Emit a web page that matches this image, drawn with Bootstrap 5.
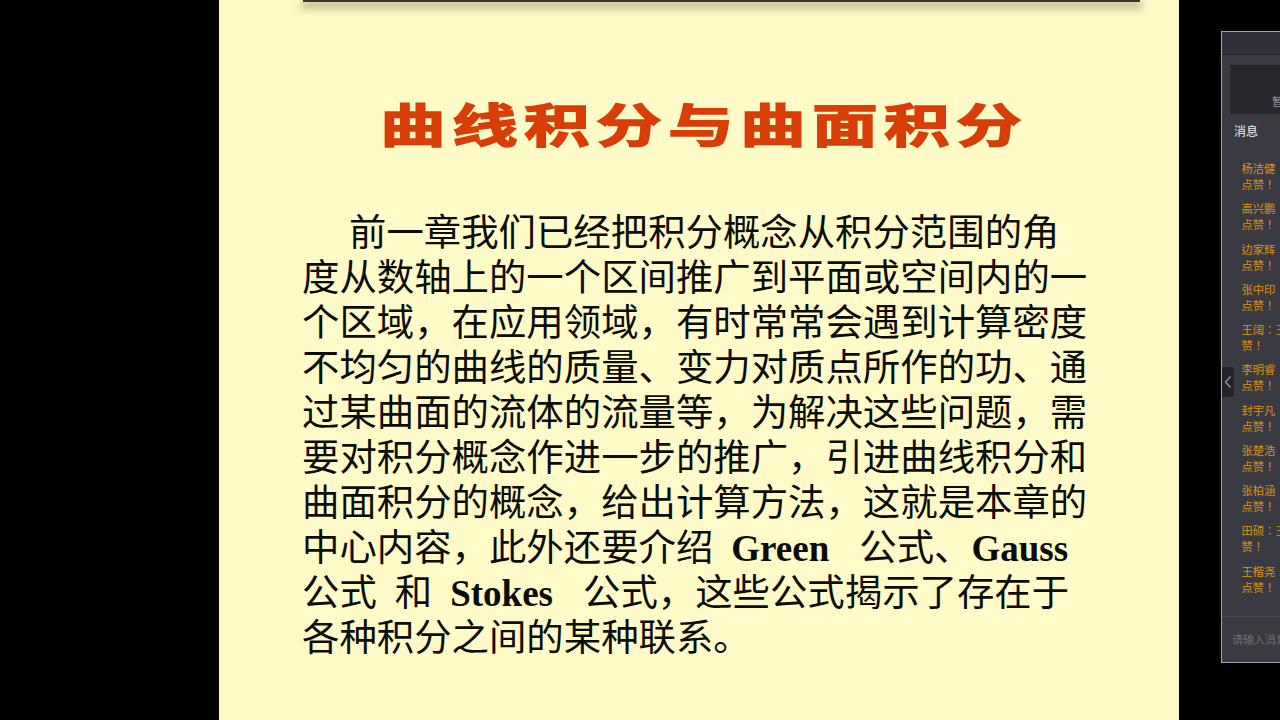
<!doctype html>
<html lang="zh-CN">
<head>
<meta charset="utf-8">
<title>曲线积分与曲面积分</title>
<link rel="stylesheet" href="https://cdn.jsdelivr.net/npm/bootstrap@5.3.0/dist/css/bootstrap.min.css">
<style>
html,body{height:720px;overflow:hidden;background:#000}
.stage{width:1280px;height:720px;background:#000;overflow:hidden}
.slide{width:960px;height:720px;margin-left:219px;background:#fffbc8;font-family:"Liberation Serif","Noto Sans CJK SC",serif;color:#0c0c08}
.topbar{height:2px;margin:0 39px 0 84px;background:#3d3230;box-shadow:0 4px 9px 2px rgba(120,110,60,.6)}
.heading{height:74px;margin-top:83px;margin-left:10px;margin-bottom:52px;text-align:center;line-height:74px;white-space:nowrap;color:#d93d08;font-family:"Noto Sans CJK SC",sans-serif;font-weight:700;font-size:46px;letter-spacing:4.7px;-webkit-text-stroke:1.6px #d93d08}
.heading span{display:inline-block;transform:scaleX(1.42)}
.passage{padding-left:83px;font-size:37.4px;line-height:45px;white-space:nowrap}
.passage div:first-child{padding-left:47px}
.passage b{font-size:37px;line-height:0;font-family:"Liberation Serif",serif}
.gap-a{display:inline-block;width:18px}
.gap-b{display:inline-block;width:30px}
.gap-c{display:inline-block;width:18px}
.chatwin{position:absolute;left:1221px;top:31px;width:340px;height:632px;background:#393a42;border:1px solid #a6a6a8;border-right:0;font-family:"Noto Sans CJK SC",sans-serif}
.wintitle{height:23px;background:#30313a;border-bottom:1px solid #1f2024}
.vidbox{height:49px;margin:10px 0 0 8px;background:#27282d;color:#96969a;font-size:11px;padding:28px 0 0 42px;line-height:16px;white-space:nowrap}
.msglabel{margin:8px 0 0 12px;color:#f0f0f2;font-size:12px;line-height:18px}
.msgs{margin:20px 0 0 19.5px;width:80px;height:450px;color:#dc930f;font-family:"Noto Sans CJK TC",sans-serif;font-size:11.3px;line-height:16px}
.msgs p{margin:0 0 8.25px}
.inputrow{position:absolute;left:0;right:0;bottom:0;height:46px;border-top:1px solid #4a4b52;color:#6f7076;font-size:11px;line-height:45px;padding-left:10px;white-space:nowrap}
.tab{position:absolute;left:0;top:335px;width:12px;height:30px;background:#23242a;border-radius:0 3px 3px 0}
.tab svg{display:block;margin:8px 0 0 2px}
</style>
</head>
<body class="m-0 p-0">
<div class="stage position-relative">
  <main class="slide">
    <div class="topbar"></div>
    <h1 class="heading"><span>曲线积分与曲面积分</span></h1>
    <div class="passage">
      <div>前一章我们已经把积分概念从积分范围的角</div>
      <div>度从数轴上的一个区间推广到平面或空间内的一</div>
      <div>个区域，在应用领域，有时常常会遇到计算密度</div>
      <div>不均匀的曲线的质量、变力对质点所作的功、通</div>
      <div>过某曲面的流体的流量等，为解决这些问题，需</div>
      <div>要对积分概念作进一步的推广，引进曲线积分和</div>
      <div>曲面积分的概念，给出计算方法，这就是本章的</div>
      <div>中心内容，此外还要介绍<span class="gap-a"></span><b>Green</b><span class="gap-b"></span>公式、<b>Gauss</b></div>
      <div>公式<span class="gap-c"></span>和<span class="gap-c"></span><b>Stokes</b><span class="gap-b"></span>公式，这些公式揭示了存在于</div>
      <div>各种积分之间的某种联系。</div>
    </div>
  </main>
  <aside class="chatwin">
    <div class="wintitle"></div>
    <div class="vidbox">暂无视频</div>
    <div class="msglabel">消息</div>
    <div class="msgs" lang="zh-Hant">
      <p>杨洁健：王老师点赞！</p>
      <p>高兴鹏：王老师点赞！</p>
      <p>边家辉：王老师点赞！</p>
      <p>张中印：王老师点赞！</p>
      <p>王阔：王老师点赞！</p>
      <p>李明睿：王老师点赞！</p>
      <p>封宇凡：王老师点赞！</p>
      <p>张楚浩：王老师点赞！</p>
      <p>张柏涵：王老师点赞！</p>
      <p>田硕：王老师点赞！</p>
      <p>王楷尧：王老师点赞！</p>
    </div>
    <div class="tab"><svg width="8" height="14" viewBox="0 0 8 14" fill="none" stroke="#9a9ba0" stroke-width="1.3"><path d="M6.5 1.5 1.5 7l5 5.5"/></svg></div>
    <div class="inputrow">请输入消息</div>
  </aside>
</div>
<script src="https://cdn.jsdelivr.net/npm/bootstrap@5.3.0/dist/js/bootstrap.bundle.min.js"></script>
</body>
</html>
